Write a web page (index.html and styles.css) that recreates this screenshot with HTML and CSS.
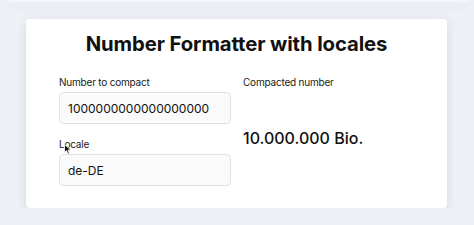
FILE: index.html
```html
<!DOCTYPE html>
<html lang="en">
  <head>
    <meta charset="UTF-8" />
    <title>Number Formatter with locales</title>
    <link rel="stylesheet" href="styles.css">
  </head>
  <body>
    <div class="prev-card"></div>
    <div class="card">
      <h1>Number Formatter with locales</h1>
      <div class="form-grid">
        <div class="field">
          <label for="number">Number to compact</label>
          <input id="number" type="text" value="1000000000000000000" />
          <label for="locale" class="locale-label">Locale</label>
          <input id="locale" type="text" value="de-DE" />
        </div>
        <div class="result">
          <span class="result-label">Compacted number</span>
          <div class="result-value">10.000.000 Bio.</div>
        </div>
      </div>
      <!-- mouse pointer from the recording -->
      <svg class="pointer" width="8" height="11" viewBox="0 0 8 11">
        <path d="M0.5 0.5 L0.5 8.5 L2.5 6.6 L4 10 L5.4 9.4 L4 6.1 L6.8 6.1 Z" fill="#111" stroke="#fff" stroke-width="0.8" />
      </svg>
    </div>
  </body>
</html>
```

FILE: styles.css
```css
html,
body {
  margin: 0;
  padding: 0;
  overflow: hidden;
  background: #eef0f6;
  font-family: Inter, "Noto Sans", sans-serif;
  color: #111;
}

.prev-card {
  height: 2px;
  margin: 0 6px;
  background: #f4f5f9;
  box-shadow: 0 4px 10px rgba(30, 40, 80, 0.08);
}

.card {
  position: relative;
  width: 421px;
  height: 189px;
  margin: 17px 0 0 26px;
  background: #fff;
  border-radius: 4px;
  box-shadow: 0 3px 10px rgba(30, 40, 80, 0.12);
  box-sizing: border-box;
  padding: 12px 33px 0;
}

h1 {
  margin: 0;
  text-align: center;
  font-size: 20.3px;
  font-weight: 700;
  line-height: 26px;
  letter-spacing: -0.1px;
}

.form-grid {
  display: grid;
  grid-template-columns: 172px 1fr;
  column-gap: 12px;
  margin-top: 19px;
}

.field label,
.result-label {
  display: block;
  font-size: 10px;
  line-height: 13px;
  letter-spacing: -0.2px;
  color: #1a1a1a;
}

.field input {
  display: block;
  width: 100%;
  height: 32px;
  box-sizing: border-box;
  margin-top: 3px;
  padding: 0 8px;
  border: 1px solid #e2e2e4;
  border-radius: 4px;
  background: #fafafa;
  font-family: inherit;
  font-size: 12px;
  color: #111;
}

.field .locale-label {
  margin-top: 14px;
}

.result-value {
  margin-top: 39px;
  font-size: 16px;
  font-weight: 500;
  line-height: 20px;
}

.pointer {
  position: absolute;
  left: 38px;
  top: 125px;
}
```
